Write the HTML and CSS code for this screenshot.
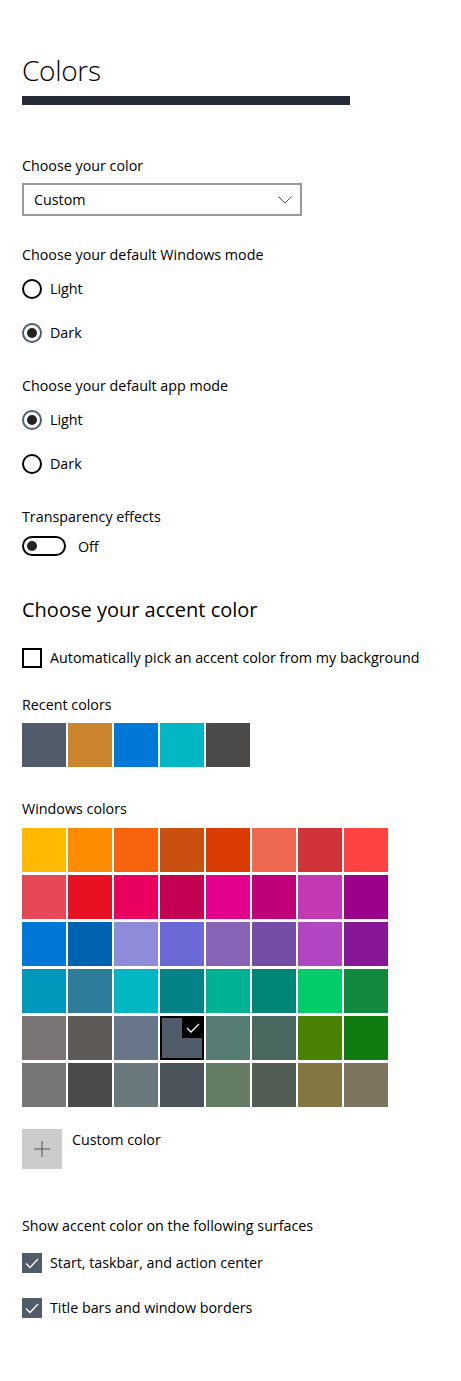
FILE: index.html
```html
<!DOCTYPE html>
<html>
<head>
<meta charset="utf-8">
<link rel="stylesheet" href="styles.css">
</head>
<body>
<main class="page">
  <h1 class="title">Colors</h1>
  <div class="title-bar"></div>

  <div class="label l-color">Choose your color</div>
  <div class="dropdown">
    <span>Custom</span>
    <svg class="chev" width="14" height="8" viewBox="0 0 14 8"><path d="M0.5 0.5 L7 7 L13.5 0.5" fill="none" stroke="#555" stroke-width="1"/></svg>
  </div>

  <div class="label l-mode">Choose your default Windows mode</div>
  <div class="option r1"><span class="radio"></span><span>Light</span></div>
  <div class="option r2"><span class="radio on"></span><span>Dark</span></div>

  <div class="label l-app">Choose your default app mode</div>
  <div class="option r1"><span class="radio on"></span><span>Light</span></div>
  <div class="option r2"><span class="radio"></span><span>Dark</span></div>

  <div class="label l-trans">Transparency effects</div>
  <div class="toggle-row"><span class="toggle"><span class="knob"></span></span><span>Off</span></div>

  <h2 class="subtitle">Choose your accent color</h2>
  <div class="option cb-auto"><span class="checkbox"></span><span>Automatically pick an accent color from my background</span></div>

  <div class="label l-recent">Recent colors</div>
  <div class="recent">
    <span class="sw" style="background:#515c6b"></span>
    <span class="sw" style="background:#cb862d"></span>
    <span class="sw" style="background:#0078d7"></span>
    <span class="sw" style="background:#00b7c3"></span>
    <span class="sw" style="background:#4c4a48"></span>
  </div>

  <div class="label l-win">Windows colors</div>
  <div class="grid">
    <span class="sw" style="background:#ffb900"></span>
    <span class="sw" style="background:#ff8c00"></span>
    <span class="sw" style="background:#f7630c"></span>
    <span class="sw" style="background:#ca5010"></span>
    <span class="sw" style="background:#da3b01"></span>
    <span class="sw" style="background:#ef6950"></span>
    <span class="sw" style="background:#d13438"></span>
    <span class="sw" style="background:#ff4343"></span>

    <span class="sw" style="background:#e74856"></span>
    <span class="sw" style="background:#e81123"></span>
    <span class="sw" style="background:#ea005e"></span>
    <span class="sw" style="background:#c30052"></span>
    <span class="sw" style="background:#e3008c"></span>
    <span class="sw" style="background:#bf0077"></span>
    <span class="sw" style="background:#c239b3"></span>
    <span class="sw" style="background:#9a0089"></span>

    <span class="sw" style="background:#0078d7"></span>
    <span class="sw" style="background:#0063b1"></span>
    <span class="sw" style="background:#8e8cd8"></span>
    <span class="sw" style="background:#6b69d6"></span>
    <span class="sw" style="background:#8764b8"></span>
    <span class="sw" style="background:#744da9"></span>
    <span class="sw" style="background:#b146c2"></span>
    <span class="sw" style="background:#881798"></span>

    <span class="sw" style="background:#0099bc"></span>
    <span class="sw" style="background:#2d7d9a"></span>
    <span class="sw" style="background:#00b7c3"></span>
    <span class="sw" style="background:#038387"></span>
    <span class="sw" style="background:#00b294"></span>
    <span class="sw" style="background:#018574"></span>
    <span class="sw" style="background:#00cc6a"></span>
    <span class="sw" style="background:#10893e"></span>

    <span class="sw" style="background:#7a7574"></span>
    <span class="sw" style="background:#5d5a58"></span>
    <span class="sw" style="background:#68768a"></span>
    <span class="sw selected" style="background:#515c6b">
      <span class="corner"><svg width="14" height="10" viewBox="0 0 14 10"><path d="M1 5 L5 9 L13 1" fill="none" stroke="#fff" stroke-width="1.3"/></svg></span>
    </span>
    <span class="sw" style="background:#567c73"></span>
    <span class="sw" style="background:#486860"></span>
    <span class="sw" style="background:#498205"></span>
    <span class="sw" style="background:#107c10"></span>

    <span class="sw" style="background:#767676"></span>
    <span class="sw" style="background:#4c4a48"></span>
    <span class="sw" style="background:#69797e"></span>
    <span class="sw" style="background:#4a5459"></span>
    <span class="sw" style="background:#647c64"></span>
    <span class="sw" style="background:#525e54"></span>
    <span class="sw" style="background:#847545"></span>
    <span class="sw" style="background:#7e735f"></span>
  </div>

  <div class="custom">
    <span class="plus-box"><svg width="16" height="16" viewBox="0 0 16 16"><path d="M8 0 V16 M0 8 H16" stroke="#555" stroke-width="1"/></svg></span>
    <span class="custom-label">Custom color</span>
  </div>

  <div class="label l-surf">Show accent color on the following surfaces</div>
  <div class="option c1"><span class="checkbox checked"><svg width="14" height="11" viewBox="0 0 14 11"><path d="M1 5.5 L5 9.5 L13 1" fill="none" stroke="#fff" stroke-width="1.3"/></svg></span><span>Start, taskbar, and action center</span></div>
  <div class="option c2"><span class="checkbox checked"><svg width="14" height="11" viewBox="0 0 14 11"><path d="M1 5.5 L5 9.5 L13 1" fill="none" stroke="#fff" stroke-width="1.3"/></svg></span><span>Title bars and window borders</span></div>
</main>
</body>
</html>
```

FILE: styles.css
```css
* { box-sizing: border-box; }
html, body { margin: 0; padding: 0; background: #fff; }
body {
  font-family: "Open Sans", "Noto Sans", "Liberation Sans", sans-serif;
  font-size: 14.3px;
  color: #000;
  width: 461px;
  height: 1381px;
}
.page {
  padding: 50px 22px 0 22px;
  display: flex;
  flex-direction: column;
  align-items: flex-start;
}
.title {
  margin: 0;
  font-size: 28px;
  font-weight: 300;
  line-height: 40px;
  height: 40px;
  letter-spacing: -0.3px;
}
.title-bar {
  margin-top: 6px;
  width: 328px;
  height: 9px;
  background: #262b38;
}
.label {
  line-height: 20px;
  height: 20px;
}
.l-color { margin-top: 51px; }
.dropdown {
  margin-top: 7px;
  width: 280px;
  height: 33px;
  border: 2px solid #999;
  display: flex;
  align-items: center;
  justify-content: space-between;
  padding: 0 8px 0 10px;
}
.chev { display: block; }
.l-mode { margin-top: 29px; }
.option {
  display: flex;
  align-items: center;
  gap: 8px;
  height: 20px;
  line-height: 20px;
}
.r1 { margin-top: 14px; }
.r2 { margin-top: 24px; }
.l-app { margin-top: 33px; }
.radio {
  width: 20px;
  height: 20px;
  border-radius: 50%;
  border: 2px solid #000;
  display: flex;
  align-items: center;
  justify-content: center;
  flex: none;
}
.radio.on { border-color: #515c6b; }
.radio.on::after {
  content: "";
  width: 10px;
  height: 10px;
  border-radius: 50%;
  background: #222;
}
.l-trans { margin-top: 33px; }
.toggle-row {
  margin-top: 9px;
  display: flex;
  align-items: center;
  gap: 12px;
  height: 20px;
}
.toggle {
  width: 44px;
  height: 20px;
  border: 2px solid #000;
  border-radius: 10px;
  display: flex;
  align-items: center;
  padding-left: 3px;
}
.knob {
  width: 10px;
  height: 10px;
  border-radius: 50%;
  background: #222;
}
.subtitle {
  margin: 40px 0 0 0;
  font-size: 20px;
  font-weight: 400;
  line-height: 28px;
  height: 28px;
}
.cb-auto { margin-top: 24px; }
.checkbox {
  width: 20px;
  height: 20px;
  border: 2px solid #000;
  flex: none;
  display: flex;
  align-items: center;
  justify-content: center;
}
.checkbox.checked {
  border: none;
  background: #515c6b;
}
.checkbox svg { display: block; }
.l-recent { margin-top: 27px; }
.recent {
  margin-top: 8px;
  display: flex;
  gap: 2px;
}
.sw {
  display: block;
  width: 44px;
  height: 44px;
}
.l-win { margin-top: 32px; }
.grid {
  margin-top: 9px;
  display: grid;
  grid-template-columns: repeat(8, 44px);
  grid-auto-rows: 44px;
  column-gap: 2px;
  row-gap: 3px;
}
.sw.selected {
  position: relative;
  border: 2px solid #000;
}
.corner {
  position: absolute;
  top: -1px;
  right: -1px;
  width: 21px;
  height: 21px;
  background: #000;
  display: flex;
  align-items: center;
  justify-content: center;
}
.corner svg { display: block; }
.custom {
  margin-top: 22px;
  display: flex;
  align-items: flex-start;
  gap: 10px;
}
.plus-box {
  width: 40px;
  height: 40px;
  background: #ccc;
  display: flex;
  align-items: center;
  justify-content: center;
}
.plus-box svg { display: block; }
.custom-label {
  line-height: 20px;
  margin-top: 1px;
}
.l-surf { margin-top: 47px; }
.c1 { margin-top: 17px; }
.c2 { margin-top: 25px; }
```
